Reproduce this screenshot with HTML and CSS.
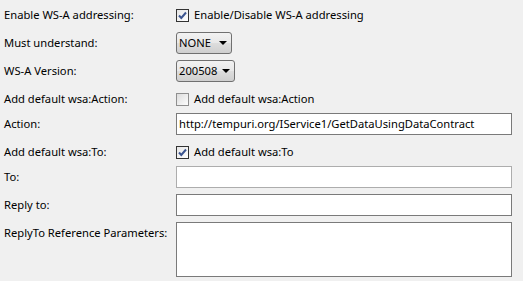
FILE: index.html
```html
<!DOCTYPE html>
<html>
<head>
<meta charset="utf-8">
<link rel="stylesheet" href="styles.css">
</head>
<body>
<div class="form">
  <div class="row r1">
    <div class="label">Enable WS-A addressing:</div>
    <div class="ctrl"><span class="cb checked"><svg viewBox="0 0 13 13" width="13" height="13"><path d="M3 6.5 L5.3 9 L10 3.5" fill="none" stroke="#3c5590" stroke-width="2"/></svg></span><span class="cbtext">Enable/Disable WS-A addressing</span></div>
  </div>
  <div class="row r2">
    <div class="label">Must understand:</div>
    <div class="ctrl"><div class="select s1"><span>NONE</span><span class="arrow"></span></div></div>
  </div>
  <div class="row r3">
    <div class="label">WS-A Version:</div>
    <div class="ctrl"><div class="select s2"><span>200508</span><span class="arrow"></span></div></div>
  </div>
  <div class="row r4">
    <div class="label">Add default wsa:Action:</div>
    <div class="ctrl"><span class="cb"></span><span class="cbtext">Add default wsa:Action</span></div>
  </div>
  <div class="row r5">
    <div class="label">Action:</div>
    <div class="ctrl"><div class="input">http://tempuri.org/IService1/GetDataUsingDataContract</div></div>
  </div>
  <div class="row r6">
    <div class="label">Add default wsa:To:</div>
    <div class="ctrl"><span class="cb checked"><svg viewBox="0 0 13 13" width="13" height="13"><path d="M3 6.5 L5.3 9 L10 3.5" fill="none" stroke="#3c5590" stroke-width="2"/></svg></span><span class="cbtext">Add default wsa:To</span></div>
  </div>
  <div class="row r7">
    <div class="label">To:</div>
    <div class="ctrl"><div class="input disabled"></div></div>
  </div>
  <div class="row r8">
    <div class="label">Reply to:</div>
    <div class="ctrl"><div class="input"></div></div>
  </div>
  <div class="row r9">
    <div class="label">ReplyTo Reference Parameters:</div>
    <div class="ctrl"><div class="input area"></div></div>
  </div>
</div>
</body>
</html>
```

FILE: styles.css
```css
html, body {
  margin: 0;
  padding: 0;
  background: #f0f0f0;
  width: 523px;
  height: 281px;
  overflow: hidden;
}
body {
  font-family: "Noto Sans", "Open Sans", sans-serif;
  font-size: 11.2px;
  color: #000;
}
.form {
  display: flex;
  flex-direction: column;
  padding-top: 4px;
}
.row {
  display: flex;
  align-items: center;
  height: 22px;
  margin-top: 6px;
}
.r1 { margin-top: 0; }
.r5, .r7 { margin-top: 3px; }
.r9 {
  height: 55px;
  align-items: flex-start;
}
.r9 .label { padding-top: 3px; }
.label {
  width: 172px;
  padding-left: 4px;
  white-space: nowrap;
  line-height: 16px;
  flex: none;
}
.ctrl {
  width: 336px;
  display: flex;
  align-items: center;
  flex: none;
}
.cb {
  width: 11px;
  height: 11px;
  border: 1px solid #8f8f8f;
  background: linear-gradient(135deg, #dcdcdc, #fdfdfd);
  display: inline-flex;
  position: relative;
  flex: none;
}
.cb.checked {
  border-color: #333;
  background: linear-gradient(135deg, #e6e6e6, #ffffff);
}
.cb svg {
  position: absolute;
  left: -1px;
  top: -1px;
}
.cbtext {
  margin-left: 5px;
  line-height: 16px;
}
.select {
  height: 20px;
  border: 1px solid #707070;
  border-radius: 3px;
  background: linear-gradient(#f2f2f2, #e8e8e8 50%, #dddddd 51%, #cfcfcf);
  display: flex;
  align-items: center;
  padding-left: 2px;
  box-sizing: content-box;
}
.s1 { width: 52px; }
.s2 { width: 55px; }
.select span:first-child { flex: 1; line-height: 16px; }
.arrow {
  width: 0;
  height: 0;
  border-left: 4px solid transparent;
  border-right: 4px solid transparent;
  border-top: 4px solid #000;
  margin-right: 4px;
}
.input {
  width: 334px;
  height: 20px;
  border: 1px solid #7a7a7a;
  background: #fff;
  box-sizing: content-box;
  padding: 0;
  text-indent: 2px;
  line-height: 20px;
  white-space: nowrap;
}
.input.disabled { border-color: #adadad; }
.input.area { height: 53px; }
```
